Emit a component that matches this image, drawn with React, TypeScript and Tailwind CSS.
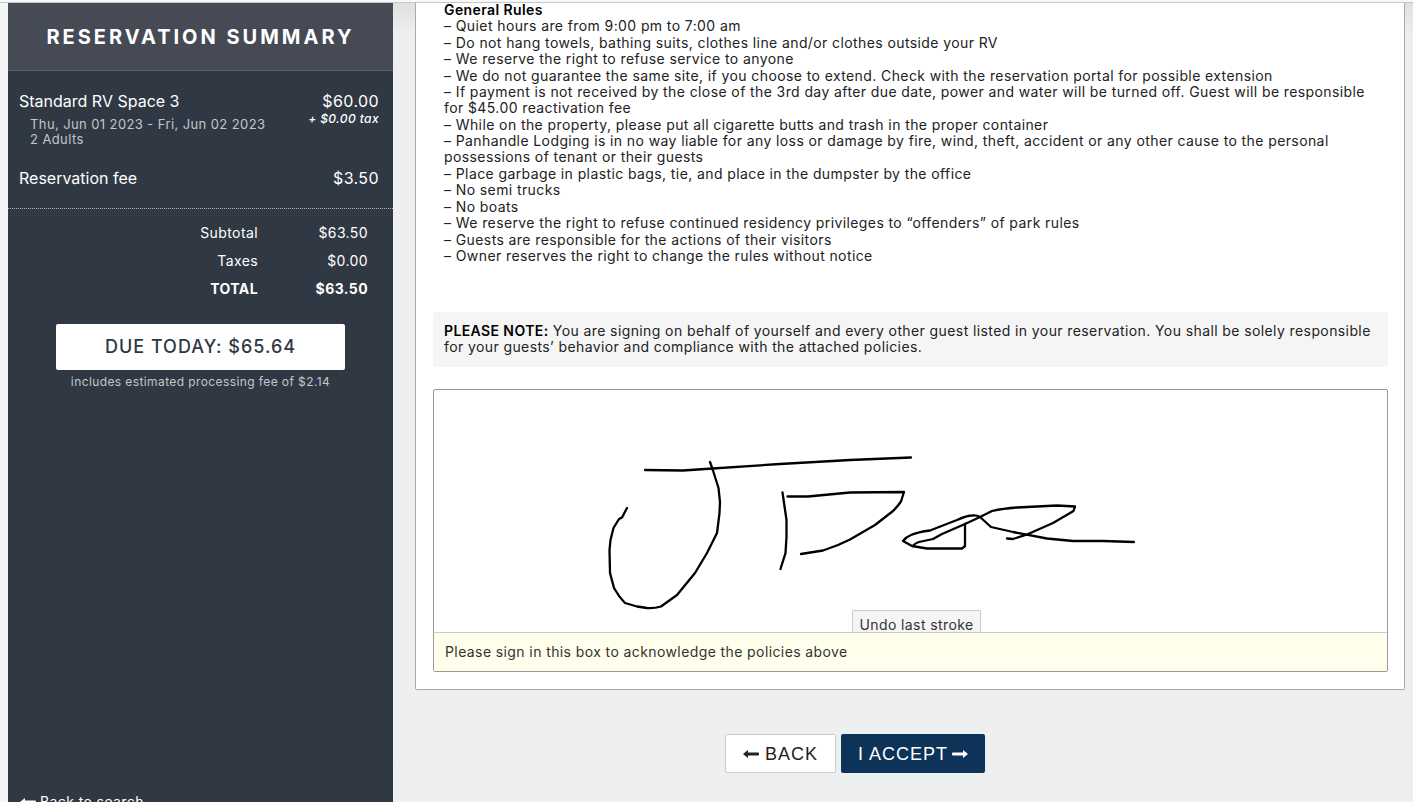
import { useState } from "react";

type Rule = string;

const rules: Rule[] = [
  "Quiet hours are from 9:00 pm to 7:00 am",
  "Do not hang towels, bathing suits, clothes line and/or clothes outside your RV",
  "We reserve the right to refuse service to anyone",
  "We do not guarantee the same site, if you choose to extend. Check with the reservation portal for possible extension",
  "If payment is not received by the close of the 3rd day after due date, power and water will be turned off. Guest will be responsible for $45.00 reactivation fee",
  "While on the property, please put all cigarette butts and trash in the proper container",
  "Panhandle Lodging is in no way liable for any loss or damage by fire, wind, theft, accident or any other cause to the personal possessions of tenant or their guests",
  "Place garbage in plastic bags, tie, and place in the dumpster by the office",
  "No semi trucks",
  "No boats",
  "We reserve the right to refuse continued residency privileges to “offenders” of park rules",
  "Guests are responsible for the actions of their visitors",
  "Owner reserves the right to change the rules without notice",
];

const initialStrokes = [
  "M645 470L683 470.5L705 469L780 464L850 460L911 457.5",
  "M710 462L713 470.5L718.5 488L720 502L719.5 513L717 533L707 553L695 573L677 595L661 606.5Q654 608.5 647 608L637 606.5L625 603Q619 597 614 588L610 573L609.5 550L610.5 540L613.5 528L619 519L622 517.5L627 508",
  "M782.5 492.5L786.5 520V537L785.5 553L780.5 569",
  "M787.5 496.5H808L850 492.5L904 492L901 501.5Q898 506 893 511L875 525L850 539.5L838 545L823 550.5L801 554",
  "M965 524V546L962 548.5H927L912 546L903 541Q906 537 911 535Q918 532 930 530.5L957 520Q967 515.5 972 515.5Q977 515 980 517L991 527L1013 532L1047 538.5L1073 541H1103L1134 542",
  "M913 546Q915 543 919 542L933 539L942 534L965 524L980 517L992 511Q1003 508.5 1017 507.5L1057 505.5L1075 506.5L1073.5 511L1053 523L1027 534.5L1013 539L1007 538.5",
];

function Arrow({ flip = false }: { flip?: boolean }) {
  return (
    <svg
      viewBox="0 0 16 10"
      className={flip ? "h-[10px] w-4 -scale-x-100" : "h-[10px] w-4"}
      fill="currentColor"
      aria-hidden="true"
    >
      <path d="M0 5L5 1V3.5H15Q16 3.5 16 4.5V5.5Q16 6.5 15 6.5H5V9Z" />
    </svg>
  );
}

function Summary() {
  return (
    <aside className="flex w-[385px] shrink-0 flex-col bg-[#303843] text-white">
      <h2 className="flex h-[68px] shrink-0 items-center justify-center border-b border-[#5d646e] bg-[#454a55] text-xl font-bold tracking-[3px]">
        RESERVATION SUMMARY
      </h2>

      <div className="border-b border-dotted border-[#b5b9be] px-[11px] pt-5 pb-5">
        <div className="flex justify-between">
          <div>
            <p className="text-base leading-5 tracking-normal">Standard RV Space 3</p>
            <div className="mt-[6px] pl-[11px] text-[13px] leading-[15px] text-[#c3c6ca]">
              <p>Thu, Jun 01 2023 - Fri, Jun 02 2023</p>
              <p>2 Adults</p>
            </div>
          </div>
          <div className="pr-[3px] text-right">
            <p className="text-base leading-5">$60.00</p>
            <p className="text-xs leading-4 font-medium italic">+ $0.00 tax</p>
          </div>
        </div>
        <div className="mt-[21px] flex justify-between pr-[3px] text-base leading-5">
          <span className="tracking-normal">Reservation fee</span>
          <span>$3.50</span>
        </div>
      </div>

      <table className="mt-[10px] mr-[25px] ml-auto text-right text-sm">
        <tbody>
          <tr className="h-7">
            <th scope="row" className="text-right font-normal">Subtotal</th>
            <td className="w-[110px]">$63.50</td>
          </tr>
          <tr className="h-7">
            <th scope="row" className="text-right font-normal">Taxes</th>
            <td>$0.00</td>
          </tr>
          <tr className="h-7 font-bold">
            <th scope="row" className="text-right">TOTAL</th>
            <td>$63.50</td>
          </tr>
        </tbody>
      </table>

      <div className="mx-12 mt-[21px] rounded-xs bg-white py-[9px] text-center text-lg leading-7 font-medium tracking-[1px] text-[#303843]">
        DUE TODAY: $65.64
      </div>
      <p className="mt-1 text-center text-xs leading-4 text-[#c3c6ca]">
        includes estimated processing fee of $2.14
      </p>

      <footer className="mt-auto h-[10px] pl-3">
        <a href="#search" className="flex items-center gap-1 text-sm leading-5">
          <Arrow />
          Back to search
        </a>
      </footer>
    </aside>
  );
}

function SignatureBox() {
  const [strokes, setStrokes] = useState(initialStrokes);

  return (
    <section className="mt-[22px] rounded-xs border border-[#999]">
      <div className="relative flex h-[242px] items-end justify-center overflow-hidden pl-3">
        <svg
          viewBox="434 390 953 242"
          className="absolute inset-0 h-full w-full"
          fill="none"
          stroke="#000"
          strokeWidth="2.3"
          strokeLinecap="round"
          strokeLinejoin="round"
          role="img"
          aria-label="Signature"
        >
          {strokes.map((d) => (
            <path key={d} d={d} />
          ))}
        </svg>
        <button
          type="button"
          onClick={() => setStrokes(strokes.slice(0, -1))}
          className="relative rounded-t-xs border border-b-0 border-[#ccc] bg-[#f5f5f5] px-[6px] pt-[6px] text-sm leading-[15px] text-[#333]"
        >
          Undo last stroke
        </button>
      </div>
      <p className="border-t border-[#ccc] bg-[#ffffeb] px-[11px] py-[11px] text-sm leading-4 text-[#333]">
        Please sign in this box to acknowledge the policies above
      </p>
    </section>
  );
}

export default function App() {
  return (
    <div className="flex h-screen flex-col overflow-hidden bg-[#edeff1] font-['Inter',sans-serif] tracking-wide text-[#222]">
      <div className="relative z-10 h-[3px] shrink-0 border-b border-[#c6c6c8] bg-[#f8f8f8]" />
      <div className="flex min-h-0 flex-1 border-l-8 border-[#f4f4f4]">
        <Summary />
        <main className="min-w-0 flex-1 bg-linear-to-b from-[#dfe0e2] to-[#edeff1] to-[32px] pr-2 pl-[22px]">
          <div className="-mt-px rounded-b-xs border border-t-0 border-[#aaa] bg-white pr-4 pb-[17px] pl-[17px]">
            <div className="flex min-h-[262px] flex-col px-[11px] text-sm leading-4">
              <h3 className="font-semibold text-black">General Rules</h3>
              <ul className="flex flex-1 flex-col justify-between">
                {rules.map((rule) => (
                  <li key={rule}>– {rule}</li>
                ))}
              </ul>
            </div>

            <p className="mt-12 rounded-sm bg-[#f5f5f5] px-[11px] pt-[11px] pb-3 text-sm leading-4">
              <strong className="font-semibold text-black">PLEASE NOTE:</strong> You are signing on
              behalf of yourself and every other guest listed in your reservation. You shall be
              solely responsible for your guests’ behavior and compliance with the attached
              policies.
            </p>

            <SignatureBox />
          </div>

          <div className="mt-11 flex justify-center gap-[5px] pr-[110px] font-['Liberation_Sans',sans-serif] text-lg tracking-[1px]">
            <button
              type="button"
              className="flex h-[39px] items-center gap-[6px] rounded-xs border border-[#ccc] bg-white px-[17px]"
            >
              <Arrow />
              BACK
            </button>
            <button
              type="button"
              className="flex h-[39px] items-center gap-1 rounded-xs bg-[#0d3358] px-[17px] text-white"
            >
              I ACCEPT
              <Arrow flip />
            </button>
          </div>
        </main>
      </div>
    </div>
  );
}
